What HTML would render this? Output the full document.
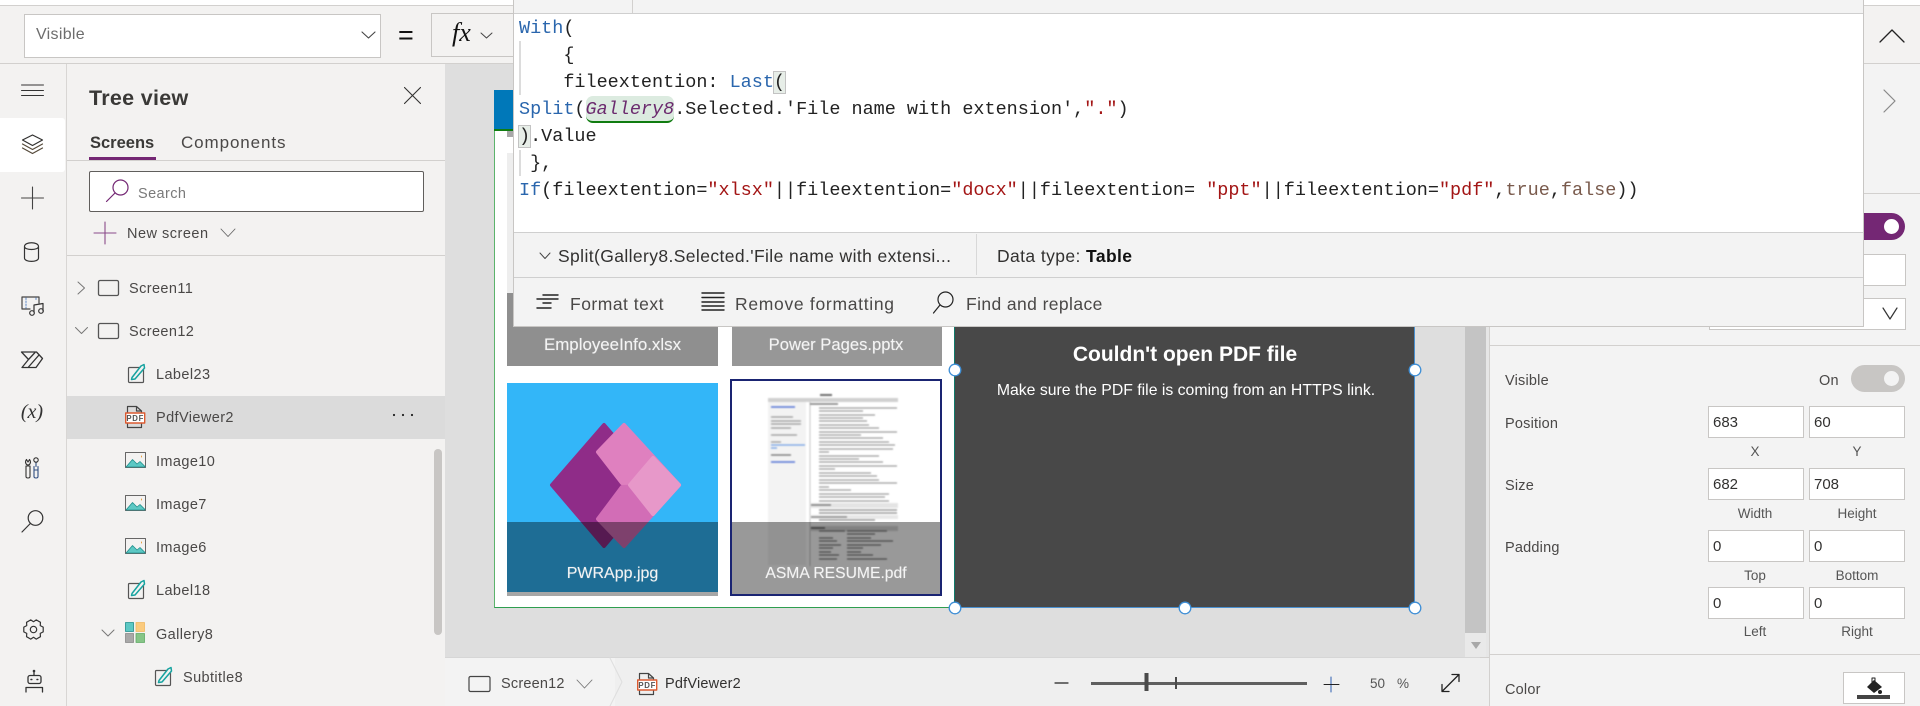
<!DOCTYPE html>
<html><head><meta charset="utf-8"><title>Power Apps Studio</title>
<style>
html,body{margin:0;padding:0;width:1920px;height:706px;overflow:hidden;background:#f3f2f1;font-family:"Liberation Sans",sans-serif;color:#323130}
.b{position:absolute}
.t{position:absolute;white-space:nowrap;line-height:20px;margin-top:-9px}
.tree{font-size:14.5px;color:#4a4847;letter-spacing:.4px}
.c{transform:translateX(-50%)}
.tile{color:#f4f4f4;text-shadow:0 0 1px rgba(255,255,255,.45)}
.i{position:absolute;height:30px;background:#fff;border:1px solid #c8c6c4;font-size:15px;line-height:32px;padding-left:4px;box-sizing:content-box;width:90px;color:#323130}
.lab{font-size:13.5px;color:#555;transform:translateX(-50%)}
.pl{font-size:14.5px;color:#4a4847;letter-spacing:.2px}
#code{position:absolute;left:519px;top:15px;font:18.48px/27px "Liberation Mono",monospace;color:#222;white-space:pre}
#code div{height:27px}
.k{color:#2a66ad}.s{color:#a31515}.v{color:#795a4c}
.g{font-style:italic;color:#6b2a6e;background:#dcebe0;border-bottom:2px solid #107c10;border-radius:7px;padding:3px 0 1px}
.br{background:#e7eee8;outline:1px solid #c3c3c3}
svg{position:absolute;left:0;top:0}
</style></head><body>

<!-- top chrome -->
<div class="b" style="left:0;top:0;width:1920px;height:5px;background:#fff"></div>
<div class="b" style="left:0;top:5px;width:1920px;height:1px;background:#d2d0ce"></div>
<div class="b" style="left:0;top:63px;width:1920px;height:1px;background:#d2d0ce"></div>
<div class="b" style="left:24px;top:14px;width:355px;height:42px;background:#fff;border:1px solid #c8c6c4"></div>
<div class="t" style="left:36px;top:34px;font-size:16px;color:#6d6d6d;letter-spacing:.3px">Visible</div>
<div class="b" style="left:431px;top:13px;width:90px;height:42px;border:1px solid #c8c6c4;background:#f3f2f1"></div>
<div class="t" style="left:398px;top:34px;font-size:27px;color:#111">=</div>
<div class="t" style="left:452px;top:32px;font:italic 26px/20px 'Liberation Serif',serif;color:#111">fx</div>

<!-- rail + tree -->
<div class="b" style="left:66px;top:64px;width:1px;height:642px;background:#d8d6d4"></div>
<div class="b" style="left:0;top:118px;width:65px;height:54px;background:#fff;border-radius:0 3px 3px 0"></div>
<div class="t" style="left:32px;top:411px;font:italic 20px/20px 'Liberation Serif',serif;color:#333;transform:translateX(-50%)">(x)</div>

<div class="t" style="left:89px;top:97px;font-size:21.500px;font-weight:600;color:#3a3937;letter-spacing:.3px">Tree view</div>
<div class="t" style="left:90px;top:142px;font-size:16.500px;font-weight:bold;color:#3a3937">Screens</div>
<div class="t" style="left:181px;top:142px;font-size:17px;color:#4a4847;letter-spacing:.9px">Components</div>
<div class="b" style="left:89px;top:157px;width:67px;height:3px;background:#742774"></div>
<div class="b" style="left:67px;top:160px;width:378px;height:1px;background:#d2d0ce"></div>
<div class="b" style="left:89px;top:171px;width:333px;height:39px;background:#fff;border:1px solid #605e5c;border-radius:2px"></div>
<div class="t" style="left:138px;top:193px;font-size:14.5px;color:#7a7a7a;letter-spacing:.4px">Search</div>
<div class="t" style="left:127px;top:233px;font-size:14.5px;color:#4a4847;letter-spacing:.5px">New screen</div>
<div class="b" style="left:67px;top:255px;width:378px;height:1px;background:#d2d0ce"></div>
<div class="b" style="left:67px;top:396px;width:378px;height:43px;background:#dbdbdb"></div>
<div class="b" style="left:434px;top:449px;width:8px;height:186px;background:#c8c6c4;border-radius:4px"></div>

<div class="t tree" style="left:129px;top:288px">Screen11</div>
<div class="t tree" style="left:129px;top:331px">Screen12</div>
<div class="t tree" style="left:156px;top:374px">Label23</div>
<div class="t tree" style="left:156px;top:417px">PdfViewer2</div>
<div class="t tree" style="left:156px;top:461px">Image10</div>
<div class="t tree" style="left:156px;top:504px">Image7</div>
<div class="t tree" style="left:156px;top:547px">Image6</div>
<div class="t tree" style="left:156px;top:590px">Label18</div>
<div class="t tree" style="left:156px;top:634px">Gallery8</div>
<div class="t tree" style="left:183px;top:677px">Subtitle8</div>

<!-- canvas -->
<div class="b" style="left:445px;top:64px;width:1044px;height:593px;background:#dedede"></div>
<div class="b" style="left:494px;top:90px;width:461px;height:518px;background:#fff;border-left:1px solid #5cb36c;border-bottom:1px solid #2e9e4f;box-sizing:border-box"></div>
<div class="b" style="left:494px;top:90px;width:461px;height:39px;background:#0078b9"></div>
<div class="b" style="left:494px;top:129px;width:461px;height:2px;background:#107c10"></div>
<div class="b" style="left:507px;top:131px;width:6px;height:6px;background:#a8a8a8"></div>
<div class="b" style="left:507px;top:153px;width:6px;height:140px;background:#eee"></div>
<div class="b" style="left:507px;top:293px;width:211px;height:73px;background:#8f8f8f"></div>
<div class="b" style="left:732px;top:293px;width:210px;height:73px;background:#979797"></div>
<div class="b" style="left:507px;top:383px;width:211px;height:213px;background:#33b6f8"></div>
<div class="b" style="left:730px;top:379px;width:208px;height:213px;background:#fff;border:2px solid #1a2472"></div>

<svg width="1920" height="706" viewBox="0 0 1920 706">
  <!-- Power Apps logo -->
  <g stroke-linejoin="round" stroke-width="4">
    <path d="M552 485 L604 425 L656 485 L604 546Z" fill="#8f2c88" stroke="#8f2c88"/>
    <path d="M598 452 L624 425 L679 485 L622 483Z" fill="#df80bf" stroke="#df80bf"/>
    <path d="M598 519 L622 487 L679 485 L624 546Z" fill="#d26db6" stroke="#d26db6"/>
    <path d="M630 485 L653 458 L679 485 L653 514Z" fill="#e798c9" stroke="#e798c9"/>
  </g>
  <rect x="507" y="522" width="211" height="70" fill="#000" fill-opacity=".4"/>
  <rect x="507" y="592" width="211" height="4" fill="#a6a6a6"/>
  <!-- resume thumbnail -->
  <g style="filter:blur(.8px)" opacity=".85">
    <rect x="768" y="398" width="130" height="4" fill="#c8c8c8"/>
    <rect x="768" y="402" width="38" height="163" fill="#f1f1f1"/>
    <path d="M810 402V566" stroke="#bbb" stroke-width="1" fill="none"/>
    <path d="M820 395h12" stroke="#555" stroke-width="2"/>
    <path d="M771 407h24" stroke="#3a5fd0" stroke-width="1.6"/>
    <path d="M771 417h22M771 421h30M771 424h30M771 428h20M771 435h26M771 442h10" stroke="#888" stroke-width="1.2" fill="none"/>
    <path d="M771 445h34M771 448h6" stroke="#5a90e0" stroke-width="1.2" fill="none"/>
    <path d="M771 455h20" stroke="#555" stroke-width="1.2"/>
    <path d="M771 462h24" stroke="#3a5fd0" stroke-width="1.4"/>
    <path d="M810 404h28" stroke="#666" stroke-width="1.4"/>
    <path d="M819 408h78M819 411h44M819 415h56M819 418h44M819 421h48M819 425h50M819 428h60M819 432h78M819 435h42M819 438h64M819 442h70M819 445h76M819 449h74M819 452h10M819 456h60M819 459h40M819 462h64M819 466h78M819 469h16M819 473h52M819 476h58M819 480h60M819 483h78M819 487h10M819 490h32M819 494h70M819 497h66M819 501h70" stroke="#8c8c8c" stroke-width="1.3" fill="none"/>
    <rect x="810" y="503" width="88" height="5" fill="#e0e0e0"/>
    <path d="M811 505h20" stroke="#555" stroke-width="1.3"/>
    <path d="M819 510h78M819 513h78" stroke="#777" stroke-width="1.3" fill="none"/>
    <rect x="810" y="515" width="88" height="4" fill="#e4e4e4"/>
    <path d="M811 517h36" stroke="#666" stroke-width="1.2"/>
    <path d="M819 520h56" stroke="#777" stroke-width="1.3"/>
    <rect x="810" y="526" width="88" height="5" fill="#d2d2d2"/>
    <path d="M811 528h14" stroke="#333" stroke-width="1.3"/>
    <path d="M819 531h26M847 531h40M847 534h28M819 538h14M847 538h24M819 541h18M847 541h46M819 545h22M847 545h34M819 548h14M847 548h16M819 552h12M847 552h14M819 555h20M847 555h26M819 559h18M847 559h40" stroke="#666" stroke-width="1.3" fill="none"/>
  </g>
  <rect x="732" y="522" width="208" height="72" fill="#000" fill-opacity=".4"/>
</svg>
<div class="b" style="left:954px;top:326px;width:461px;height:282px;background:#484848;border-left:1px solid #0f7a6a;border-bottom:1px solid #4a90d0;border-right:1px solid #4a90d0;box-sizing:border-box"></div>
<div class="t c tile" style="left:612.5px;top:344px;font-size:16.900px">EmployeeInfo.xlsx</div>
<div class="t c tile" style="left:836px;top:344px;font-size:16.600px">Power Pages.pptx</div>
<div class="t c tile" style="left:612.5px;top:573px;font-size:16px">PWRApp.jpg</div>
<div class="t c tile" style="left:836px;top:573px;font-size:15.700px">ASMA RESUME.pdf</div>
<div class="t c" style="left:1185px;top:354px;font-size:21px;font-weight:bold;color:#fff">Couldn't open PDF file</div>
<div class="t c" style="left:1186px;top:390px;font-size:15.800px;color:#fff">Make sure the PDF file is coming from an HTTPS link.</div>

<!-- canvas scrollbar -->
<div class="b" style="left:1465px;top:326px;width:21px;height:307px;background:#c4c4c4"></div>
<div class="b" style="left:1465px;top:633px;width:21px;height:24px;background:#e9e9e9"></div>
<div class="b" style="left:1486px;top:64px;width:3px;height:593px;background:#e6e6e6"></div>

<!-- status bar -->
<div class="b" style="left:445px;top:657px;width:1044px;height:49px;background:#efefef;border-top:1px solid #d6d6d6;box-sizing:border-box"></div>
<div class="b" style="left:445px;top:658px;width:170px;height:48px;background:#f3f3f3"></div>
<div class="t" style="left:501px;top:683px;font-size:14.5px;color:#4a4847;letter-spacing:.2px">Screen12</div>
<div class="t" style="left:665px;top:683px;font-size:14.5px;color:#323130;letter-spacing:.2px">PdfViewer2</div>
<div class="t" style="left:1370px;top:683px;font-size:13.5px;color:#555">50</div>
<div class="t" style="left:1397px;top:683px;font-size:13.5px;color:#555">%</div>

<!-- right panel -->
<div class="b" style="left:1489px;top:64px;width:431px;height:642px;background:#f3f3f3;border-left:1px solid #d2d0ce;box-sizing:border-box"></div>
<div class="b" style="left:1480px;top:657px;width:9px;height:1px;background:#d2d0ce"></div>
<div class="b" style="left:1490px;top:193px;width:430px;height:1px;background:#d2d0ce"></div>
<div class="b" style="left:1490px;top:345px;width:430px;height:1px;background:#d2d0ce"></div>
<div class="b" style="left:1490px;top:654px;width:430px;height:1px;background:#d2d0ce"></div>
<div class="b" style="left:1850px;top:213px;width:55px;height:27px;background:#742774;border-radius:14px"></div>
<div class="b" style="left:1884px;top:219px;width:15px;height:15px;background:#fff;border-radius:50%"></div>
<div class="b" style="left:1700px;top:254px;width:204px;height:30px;background:#fff;border:1px solid #c8c6c4"></div>
<div class="b" style="left:1709px;top:298px;width:195px;height:30px;background:#fff;border:1px solid #c8c6c4"></div>

<div class="t pl" style="left:1505px;top:380px">Visible</div>
<div class="t pl" style="left:1819px;top:380px">On</div>
<div class="b" style="left:1851px;top:365px;width:54px;height:27px;background:#c8c6c4;border-radius:14px"></div>
<div class="b" style="left:1884px;top:371px;width:15px;height:15px;background:#f3f3f3;border-radius:50%"></div>
<div class="t pl" style="left:1505px;top:423px">Position</div>
<div class="t pl" style="left:1505px;top:485px">Size</div>
<div class="t pl" style="left:1505px;top:547px">Padding</div>
<div class="i" style="left:1708px;top:406px">683</div><div class="i" style="left:1809px;top:406px">60</div>
<div class="t lab" style="left:1755px;top:451px">X</div><div class="t lab" style="left:1857px;top:451px">Y</div>
<div class="i" style="left:1708px;top:468px">682</div><div class="i" style="left:1809px;top:468px">708</div>
<div class="t lab" style="left:1755px;top:513px">Width</div><div class="t lab" style="left:1857px;top:513px">Height</div>
<div class="i" style="left:1708px;top:530px">0</div><div class="i" style="left:1809px;top:530px">0</div>
<div class="t lab" style="left:1755px;top:575px">Top</div><div class="t lab" style="left:1857px;top:575px">Bottom</div>
<div class="i" style="left:1708px;top:587px">0</div><div class="i" style="left:1809px;top:587px">0</div>
<div class="t lab" style="left:1755px;top:631px">Left</div><div class="t lab" style="left:1857px;top:631px">Right</div>
<div class="t pl" style="left:1505px;top:689px">Color</div>
<div class="b" style="left:1843px;top:672px;width:60px;height:30px;background:#fff;border:1px solid #c8c6c4"></div>

<!-- formula popup -->
<div class="b" style="left:513px;top:0;width:1351px;height:327px;background:#f3f3f3;border-right:1px solid #c8c6c4;border-left:1px solid #c8c6c4;border-bottom:1px solid #c8c6c4;box-sizing:border-box"></div>
<div class="b" style="left:632px;top:0;width:1px;height:13px;background:#d2d0ce"></div>
<div class="b" style="left:514px;top:13px;width:1349px;height:1px;background:#cfcfcf"></div>
<div class="b" style="left:514px;top:14px;width:1349px;height:218px;background:#fff"></div>
<div class="b" style="left:514px;top:232px;width:1349px;height:1px;background:#cfcfcf"></div>
<div class="b" style="left:514px;top:277px;width:1349px;height:1px;background:#cfcfcf"></div>
<div class="b" style="left:976px;top:234px;width:1px;height:41px;background:#d8d8d8"></div>
<div class="b" style="left:519px;top:41px;width:2px;height:54px;background:#dcdcdc"></div>
<div class="b" style="left:519px;top:150px;width:2px;height:26px;background:#dcdcdc"></div>
<div id="code"><div><span class="k">With</span>(</div><div>    {</div><div>    fileextention: <span class="k">Last</span><span class="br">(</span></div><div><span class="k">Split</span>(<span class="g">Gallery8</span>.Selected.'File name with extension',<span class="s">"."</span>)</div><div><span class="br">)</span>.Value</div><div> },</div><div><span class="k">If</span>(fileextention=<span class="s">"xlsx"</span>||fileextention=<span class="s">"docx"</span>||fileextention= <span class="s">"ppt"</span>||fileextention=<span class="s">"pdf"</span>,<span class="v">true</span>,<span class="v">false</span>))</div></div>
<div class="t" style="left:558px;top:255px;font-size:17.500px;letter-spacing:.39px;color:#323130">Split(Gallery8.Selected.'File name with extensi...</div>
<div class="t" style="left:997px;top:255px;font-size:17.500px;letter-spacing:.4px;color:#323130">Data type: <b style="color:#111">Table</b></div>
<div class="t" style="left:570px;top:303px;font-size:17.500px;letter-spacing:.5px;color:#4a4847">Format text</div>
<div class="t" style="left:735px;top:303px;font-size:17.500px;letter-spacing:.7px;color:#4a4847">Remove formatting</div>
<div class="t" style="left:966px;top:303px;font-size:17.500px;letter-spacing:.4px;color:#4a4847">Find and replace</div>

<!-- icon overlay -->
<svg width="1920" height="706" viewBox="0 0 1920 706" fill="none" stroke-linecap="round" stroke-linejoin="round">
  <defs>
    <g id="img"><rect x=".5" y=".5" width="20" height="15" fill="#f3f2f1" stroke="#666"/><path d="M1 15L7.5 7.5L12 12L15 9.5L20 14.5V15Z" fill="#5cc8c4" stroke="#1f8f8c" stroke-width=".8"/><path d="M16.5 4v1" stroke="#e8a040"/></g>
    <g id="lbl"><rect x=".5" y="3.500" width="15" height="15" rx="1" stroke="#555" stroke-width="1.2"/><path d="M4 13.500L13 2L16 .5L16.500 4L7 15L3.500 15.500Z" fill="#f3f2f1" stroke="#17a3a0" stroke-width="1.500"/></g>
    <g id="pdf"><path d="M2.5 7V.5H11.5L16.5 5V7M2.5 17V21.5H16.5V17M11.5 .5V5H16.5" stroke="#444" stroke-width="1.2"/><rect x=".7" y="7" width="19" height="10" fill="#fff" stroke="#dc5a30" stroke-width="1.4"/><text x="10.200" y="15" font-family="Liberation Sans" font-size="7.800" font-weight="bold" fill="#555" stroke="none" text-anchor="middle" letter-spacing=".7">PDF</text></g>
  </defs>
  <!-- top bar chevrons -->
  <path d="M362 32L368.500 38L375 32" stroke="#444" stroke-width="1.1"/>
  <path d="M481 33L486.500 38L492 33" stroke="#444" stroke-width="1"/>
  <path d="M1880 42L1892 30L1904 42" stroke="#222" stroke-width="1.3"/>
  <path d="M1884 90L1895 101L1884 112" stroke="#888" stroke-width="1.2"/>
  <path d="M1883 308L1890 319L1897 308" stroke="#333" stroke-width="1.2"/>
  <!-- rail -->
  <path d="M21.500 85H43.500M21.500 90.500H43.500M21.500 95.500H43.500" stroke="#333" stroke-width="1"/>
  <path d="M22.500 140L32.500 135L42.500 140L32.500 145.500Z" stroke="#323130" stroke-width="1.2"/>
  <path d="M22.500 144L32.500 149.500L42.500 144M22.500 148L32.500 153.500L42.500 148" stroke="#554a3a" stroke-width="1.2"/>
  <path d="M21.500 198H43.500M32.500 187V209" stroke="#444" stroke-width="1.1"/>
  <path d="M24.500 246.500C24.500 241.500 38.500 241.500 38.500 246.500V258C38.500 262.500 24.500 262.500 24.500 258ZM24.500 246.500C24.500 250.500 38.500 250.500 38.500 246.500" stroke="#333" stroke-width="1.2"/>
  <path d="M30 309H22V297H39V303" stroke="#444" stroke-width="1.2"/>
  <path d="M26 298V308M36 298V301" stroke="#5a86c8" stroke-width="1" stroke-dasharray="1.5 1.5"/>
  <path d="M34 312V305L43 303.500V311" stroke="#333" stroke-width="1.2"/>
  <circle cx="32" cy="313" r="2.300" stroke="#333" stroke-width="1.200"/><circle cx="41" cy="311" r="2.300" stroke="#333" stroke-width="1.200"/>
  <path d="M21.500 352H36.500L42.500 358.500L36 367.500H22L28.500 359.500ZM28.500 367L39 355M28.500 359.500L35 352.500" stroke="#333" stroke-width="1.300"/>
  <path d="M26 466V476.500C26 478.500 30 478.500 30 476.500V466M26 466H30M26.500 459.500C24.500 462 26 465 28 465C30 465 31.500 462 29.500 459.500L28 462Z" stroke="#323130" stroke-width="1.100"/>
  <path d="M34 466.500V476.500C34 478.500 38 478.500 38 476.500V466.500M34 470H38M36 466.500V462" stroke="#2f4d80" stroke-width="1.100"/>
  <circle cx="36" cy="460" r="2.200" stroke="#323130" stroke-width="1.100"/>
  <circle cx="35.500" cy="518" r="7.300" stroke="#333" stroke-width="1.200"/><path d="M30.300 523.500L22 532" stroke="#333" stroke-width="1.200"/>
  <path d="M43.200 627.100L43.200 631.900L40.250 633.400L40.450 636.700L36.260 639.100L33.500 637.300L30.740 639.100L26.550 636.700L26.750 633.400L23.800 631.900L23.800 627.100L26.750 625.600L26.550 622.300L30.740 619.900L33.500 621.700L36.260 619.900L40.450 622.300L40.250 625.600Z" stroke="#333" stroke-width="1.200"/>
  <circle cx="33.500" cy="629.500" r="3.200" stroke="#333" stroke-width="1.200"/>
  <path d="M34 671V675" stroke="#333" stroke-width="1.300"/><circle cx="34" cy="671" r="1.300" fill="#333"/>
  <rect x="28" y="675.500" width="13" height="8" rx="2" stroke="#333" stroke-width="1.300"/>
  <path d="M31 679.500h.8M37 679.500h.8" stroke="#333" stroke-width="1.500"/>
  <path d="M26 692V687.500H42.500V692" stroke="#333" stroke-width="1.300"/>
  <!-- tree chrome -->
  <path d="M404.500 87.500L420.500 103.500M420.500 87.500L404.500 103.500" stroke="#323130" stroke-width="1.100"/>
  <circle cx="120.500" cy="187.500" r="7.500" stroke="#742774" stroke-width="1.200"/><path d="M115 193L106.500 201.500" stroke="#742774" stroke-width="1.200"/>
  <path d="M94 233H116M105 222V244" stroke="#8a4b8a" stroke-width="1.100"/>
  <path d="M221 229L228 236.500L235 229" stroke="#666" stroke-width=".9"/>
  <path d="M78 282L84.500 288L78 294" stroke="#777" stroke-width="1"/>
  <path d="M75.500 327.500L81.500 333.500L87.500 327.500" stroke="#777" stroke-width="1"/>
  <rect x="98.500" y="280.500" width="20" height="15" rx="1.500" stroke="#555" stroke-width="1.300"/>
  <rect x="98.500" y="323.500" width="20" height="15" rx="1.500" stroke="#555" stroke-width="1.300"/>
  <use href="#lbl" x="128" y="364"/>
  <use href="#pdf" x="125" y="406"/>
  <circle cx="394" cy="415" r="1.100" fill="#222"/><circle cx="403" cy="415" r="1.100" fill="#222"/><circle cx="412" cy="415" r="1.100" fill="#222"/>
  <use href="#img" x="125" y="452"/><use href="#img" x="125" y="495"/><use href="#img" x="125" y="538"/>
  <use href="#lbl" x="128" y="580"/>
  <path d="M102 630L108 636L114 630" stroke="#777" stroke-width="1"/>
  <rect x="125.500" y="622.500" width="8" height="9" fill="#5cc8c4" stroke="#1f8f8c" stroke-width=".8"/>
  <rect x="136" y="622.500" width="8.500" height="9" fill="#fbcb7e" stroke="#f0b860" stroke-width=".8"/>
  <rect x="125.500" y="633.500" width="8" height="9" fill="#a8a8a8" stroke="#888" stroke-width=".8"/>
  <rect x="136" y="633.500" width="8.500" height="9" fill="#86c587" stroke="#60aa66" stroke-width=".8"/>
  <use href="#lbl" x="155" y="667"/>
  <!-- handles -->
  <g fill="#fff" stroke="#3f8fd6" stroke-width="1.300"><circle cx="955" cy="370" r="5.800"/><circle cx="1415" cy="370" r="5.800"/><circle cx="955" cy="608" r="5.800"/><circle cx="1185" cy="608" r="5.800"/><circle cx="1415" cy="608" r="5.800"/></g>
  <path d="M1471 642H1481L1476 649Z" fill="#a8a8a8"/>
  <!-- status bar -->
  <rect x="469" y="676.500" width="21" height="15" rx="1.500" stroke="#444" stroke-width="1.200"/>
  <path d="M577 680L584.500 688L592 680" stroke="#777" stroke-width=".9"/>
  <path d="M610 658L622 682L610 706" stroke="#dedede" stroke-width="1"/>
  <use href="#pdf" x="637" y="673"/>
  <path d="M1055 683H1068" stroke="#222" stroke-width="1.200"/>
  <path d="M1091 683.500H1307" stroke="#5f5f5f" stroke-width="3" stroke-linecap="butt"/>
  <path d="M1146.500 673V691" stroke="#4a4a4a" stroke-width="4" stroke-linecap="butt"/>
  <path d="M1176 677V689" stroke="#4a4a4a" stroke-width="2" stroke-linecap="butt"/>
  <path d="M1331 677V692" stroke="#2b5cb0" stroke-width="1"/><path d="M1324 684.500H1339" stroke="#222" stroke-width="1"/>
  <path d="M1442 691.500L1459 674.500M1452 674.500H1459V681.500M1442 684.500V691.500H1449" stroke="#222" stroke-width="1.300"/>
  <!-- format bar -->
  <path d="M543 295H558M537 299H558M543 303H551M537 308H551" stroke="#222" stroke-width="1.400"/>
  <path d="M702 293H724M702 297.500H724M702 302H724M702 306H724M702 310H724" stroke="#222" stroke-width="1.400"/>
  <circle cx="945.500" cy="299.500" r="7.500" stroke="#222" stroke-width="1.200"/><path d="M940 305L933.500 313" stroke="#222" stroke-width="1.200"/>
  <path d="M540 253L545 258.500L550 253" stroke="#444" stroke-width="1"/>
  <!-- color bucket -->
  <path d="M1867 687L1874 680L1882 687L1874 693Z" fill="#222"/><path d="M1872 682V678H1875V682" stroke="#222" stroke-width="1"/>
  <circle cx="1880" cy="692" r="2" fill="#222"/>
  <rect x="1857" y="695" width="33" height="4" fill="#444"/>
</svg>
</body></html>
